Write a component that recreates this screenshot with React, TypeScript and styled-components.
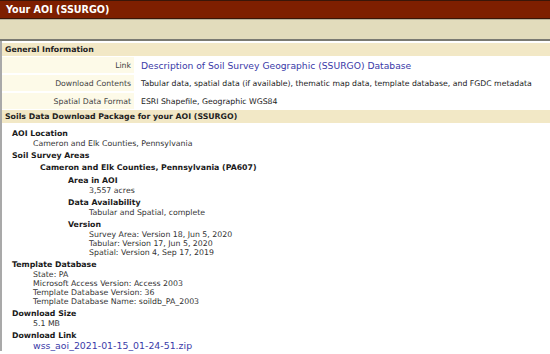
import React from 'react';
import styled, { createGlobalStyle } from 'styled-components';

const GlobalStyle = createGlobalStyle`
  html, body {
    margin: 0;
    padding: 0;
    background: #ffffff;
  }
  body {
    font-family: "DejaVu Sans", Verdana, sans-serif;
    color: #222;
  }
`;

interface InfoRow {
  label: string;
  value: string;
  link?: boolean;
}

const generalRows: InfoRow[] = [
  { label: 'Link', value: 'Description of Soil Survey Geographic (SSURGO) Database', link: true },
  { label: 'Download Contents', value: 'Tabular data, spatial data (if available), thematic map data, template database, and FGDC metadata' },
  { label: 'Spatial Data Format', value: 'ESRI Shapefile, Geographic WGS84' },
];

const App = () => {
  return (
    <Page>
      <GlobalStyle />
      <TitleBar>Your AOI (SSURGO)</TitleBar>
      <Toolbar />
      <Content>
        <SectionHeader>General Information</SectionHeader>
        <InfoTable>
          {generalRows.map((row) => (
            <React.Fragment key={row.label}>
              <LabelCell>{row.label}</LabelCell>
              <ValueCell>
                {row.link ? <BigLink href="#">{row.value}</BigLink> : row.value}
              </ValueCell>
            </React.Fragment>
          ))}
        </InfoTable>
        <SectionHeader>Soils Data Download Package for your AOI (SSURGO)</SectionHeader>
        <Tree>
          <Group>
            <Heading>AOI Location</Heading>
            <Values>
              <Line>Cameron and Elk Counties, Pennsylvania</Line>
            </Values>
          </Group>
          <Group>
            <Heading $gap={2}>Soil Survey Areas</Heading>
            <Nested>
              <Heading $gap={3}>Cameron and Elk Counties, Pennsylvania (PA607)</Heading>
              <Nested>
                <Group>
                  <Heading>Area in AOI</Heading>
                  <Values>
                    <Line>3,557 acres</Line>
                  </Values>
                </Group>
                <Group>
                  <Heading>Data Availability</Heading>
                  <Values>
                    <Line>Tabular and Spatial, complete</Line>
                  </Values>
                </Group>
                <Group>
                  <Heading>Version</Heading>
                  <Values>
                    <Line>Survey Area: Version 18, Jun 5, 2020</Line>
                    <Line>Tabular: Version 17, Jun 5, 2020</Line>
                    <Line>Spatial: Version 4, Sep 17, 2019</Line>
                  </Values>
                </Group>
              </Nested>
            </Nested>
          </Group>
          <Group>
            <Heading>Template Database</Heading>
            <Values>
              <Line>State: PA</Line>
              <Line>Microsoft Access Version: Access 2003</Line>
              <Line>Template Database Version: 36</Line>
              <Line>Template Database Name: soildb_PA_2003</Line>
            </Values>
          </Group>
          <Group>
            <Heading>Download Size</Heading>
            <Values>
              <Line>5.1 MB</Line>
            </Values>
          </Group>
          <Group>
            <Heading>Download Link</Heading>
            <Values>
              <FileLink href="#">wss_aoi_2021-01-15_01-24-51.zip</FileLink>
            </Values>
          </Group>
        </Tree>
      </Content>
    </Page>
  );
};

export default App;

const Page = styled.div`
  width: 550px;
  height: 354px;
  overflow: hidden;
  background: #ffffff;
`;

const TitleBar = styled.div`
  height: 19px;
  box-sizing: border-box;
  border-top: 1px solid #3a1608;
  border-bottom: 1px solid #3a1608;
  background: #7e1f00;
  color: #ffffff;
  font-weight: bold;
  font-size: 9.6px;
  line-height: 17px;
  padding-left: 6px;
`;

const Toolbar = styled.div`
  height: 22px;
  box-sizing: border-box;
  background: #e2dcbc;
  border-top: 1px solid #b8b29a;
  border-bottom: 2px solid #7a7a72;
`;

const Content = styled.div`
  border-left: 2px solid #a9a9a9;
  padding-top: 2px;
`;

const SectionHeader = styled.div`
  height: 13px;
  background: #f2e8c6;
  font-weight: bold;
  font-size: 7.8px;
  line-height: 14px;
  padding-left: 3px;
  color: #222;
  white-space: nowrap;
`;

const InfoTable = styled.div`
  display: grid;
  grid-template-columns: 132px 1fr;
  grid-auto-rows: 16px;
  column-gap: 7px;
  row-gap: 2px;
  padding: 1px 0 1px;
  font-size: 7.75px;
`;

const LabelCell = styled.div`
  background: #fdfae8;
  color: #444;
  padding-right: 3px;
  display: flex;
  align-items: center;
  justify-content: flex-end;
  white-space: nowrap;
`;

const ValueCell = styled.div`
  display: flex;
  align-items: center;
  color: #222;
  white-space: nowrap;
`;

const BigLink = styled.a`
  color: #3a3aa8;
  font-size: 9.2px;
  text-decoration: none;
`;

const Tree = styled.div`
  padding: 6px 0 0 10px;
  font-size: 7.8px;
`;

const Group = styled.div`
  margin-bottom: 3px;
`;

const Heading = styled.div<{ $gap?: number }>`
  font-weight: bold;
  line-height: 10px;
  color: #1a1a1a;
  margin-bottom: ${(p) => p.$gap ?? 0}px;
  white-space: nowrap;
`;

const Nested = styled.div`
  padding-left: 28px;
`;

const Values = styled.div`
  padding-left: 21px;
`;

const Line = styled.div`
  line-height: 9px;
  color: #333;
  white-space: nowrap;
`;

const FileLink = styled.a`
  display: block;
  color: #3a3aa8;
  font-size: 9.4px;
  line-height: 10px;
  text-decoration: none;
`;
